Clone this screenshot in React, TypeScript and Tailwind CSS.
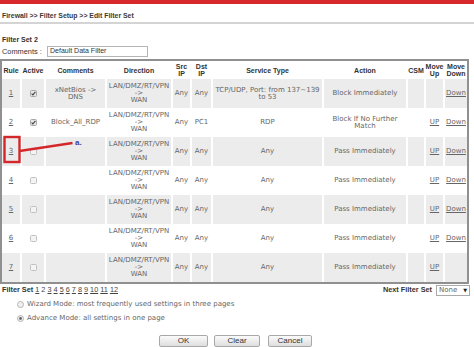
import React from "react";

const GRID =
  "grid grid-cols-[18px_22px_59px_64px_17px_19px_109px_82px_16px_17px_22px] gap-x-[2px]";

type Row = {
  n: number;
  active: boolean;
  comment: React.ReactNode;
  src: string;
  dst: string;
  svc: React.ReactNode;
  action: React.ReactNode;
  up: boolean;
  down: boolean;
};

const rows: Row[] = [
  {
    n: 1,
    active: true,
    comment: (
      <>
        xNetBios -&gt;
        <br />
        DNS
      </>
    ),
    src: "Any",
    dst: "Any",
    svc: (
      <>
        TCP/UDP, Port: from 137~139
        <br />
        to 53
      </>
    ),
    action: "Block Immediately",
    up: false,
    down: true,
  },
  {
    n: 2,
    active: true,
    comment: "Block_All_RDP",
    src: "Any",
    dst: "PC1",
    svc: "RDP",
    action: (
      <>
        Block If No Further
        <br />
        Match
      </>
    ),
    up: true,
    down: true,
  },
  { n: 3, active: false, comment: "", src: "Any", dst: "Any", svc: "Any", action: "Pass Immediately", up: true, down: true },
  { n: 4, active: false, comment: "", src: "Any", dst: "Any", svc: "Any", action: "Pass Immediately", up: true, down: true },
  { n: 5, active: false, comment: "", src: "Any", dst: "Any", svc: "Any", action: "Pass Immediately", up: true, down: true },
  { n: 6, active: false, comment: "", src: "Any", dst: "Any", svc: "Any", action: "Pass Immediately", up: true, down: true },
  { n: 7, active: false, comment: "", src: "Any", dst: "Any", svc: "Any", action: "Pass Immediately", up: true, down: false },
];

function CheckBox({ checked }: { checked: boolean }) {
  return (
    <svg width="7" height="7" viewBox="0 0 7 7">
      <rect x="0.5" y="0.5" width="6" height="6" rx="1" fill={checked ? "#e6e6e6" : "#f4f4f4"} stroke={checked ? "#a8a8a8" : "#c0c0c0"} />
      {checked && <path d="M1.6 3.6 L2.9 4.9 L5.4 1.9" fill="none" stroke="#444" strokeWidth="1.1" />}
    </svg>
  );
}

function Radio({ checked }: { checked: boolean }) {
  return (
    <svg width="7" height="7" viewBox="0 0 7 7">
      <circle cx="3.5" cy="3.5" r="3" fill="#f0f0f0" stroke="#b5b5b5" />
      {checked && <circle cx="3.5" cy="3.5" r="1.4" fill="#666" />}
    </svg>
  );
}

const cellBase = "flex flex-col items-center justify-center text-center";

function HeadCell({ children }: { children: React.ReactNode }) {
  return <div className={cellBase + " leading-[7px]"}>{children}</div>;
}

export default function App() {
  return (
    <div className="relative w-[474px] h-[347px] overflow-hidden bg-white font-['Liberation_Sans',Arial,sans-serif] text-[#333]">
      <div className="h-[4px] bg-[#d7282b]" />
      <div className="pt-[8px] pb-[2px] pl-[2px] border-b-2 border-[#d4d4d4] leading-[8px] text-[6.9px] font-bold text-[#3a3a3a]">
        Firewall &gt;&gt; Filter Setup &gt;&gt; Edit Filter Set
      </div>
      <div className="mt-[12px] pl-[2px] leading-[8px] text-[7px] font-bold">Filter Set 2</div>
      <div className="mt-[2px] flex items-center h-[11px] pl-[2px] text-[7.4px]">
        <span className="w-[45px]">Comments :</span>
        <div className="w-[101px] h-[11px] border border-[#b5b5b5] flex items-center pl-[2px] text-[7px] text-[#333]">
          Default Data Filter
        </div>
      </div>

      <div className="mt-[2px] w-[469px] border-2 border-[#909090] bg-white">
        <div className={GRID + " h-[18px] text-[7px] font-bold text-[#333]"}>
          <HeadCell>Rule</HeadCell>
          <HeadCell>Active</HeadCell>
          <HeadCell>Comments</HeadCell>
          <HeadCell>Direction</HeadCell>
          <HeadCell>
            <span>Src</span>
            <span>IP</span>
          </HeadCell>
          <HeadCell>
            <span>Dst</span>
            <span>IP</span>
          </HeadCell>
          <HeadCell>Service Type</HeadCell>
          <HeadCell>Action</HeadCell>
          <HeadCell>CSM</HeadCell>
          <HeadCell>
            <span>Move</span>
            <span>Up</span>
          </HeadCell>
          <HeadCell>
            <span>Move</span>
            <span>Down</span>
          </HeadCell>
        </div>
        {rows.map((r) => {
          const bg = r.n % 2 === 1 ? "bg-[#ececec]" : "bg-white";
          const c = cellBase + " " + bg;
          return (
            <div
              key={r.n}
              className={GRID + " h-[29px] font-['DejaVu_Sans',Verdana,sans-serif] text-[7px] leading-[6.7px] text-[#666]"}
            >
              <div className={c}>
                <span className="underline">{r.n}</span>
              </div>
              <div className={c}>
                <CheckBox checked={r.active} />
              </div>
              <div className={c}>{r.comment}</div>
              <div className={c}>
                LAN/DMZ/RT/VPN
                <br />
                -&gt;
                <br />
                WAN
              </div>
              <div className={c}>{r.src}</div>
              <div className={c}>{r.dst}</div>
              <div className={c}>{r.svc}</div>
              <div className={c}>{r.action}</div>
              <div className={c}></div>
              <div className={c}>{r.up && <span className="underline">UP</span>}</div>
              <div className={c}>{r.down && <span className="underline">Down</span>}</div>
            </div>
          );
        })}
      </div>

      <div className="mt-[1px] flex justify-between items-center h-[11px] pl-[2px] pr-[4px] text-[7.3px]">
        <div className="text-[#444]">
          <span className="font-bold text-[#333]">Filter Set</span>{" "}
          <span className="underline">1</span> <span>2</span> <span className="underline">3</span>{" "}
          <span className="underline">4</span> <span className="underline">5</span>{" "}
          <span className="underline">6</span> <span className="underline">7</span>{" "}
          <span className="underline">8</span> <span className="underline">9</span>{" "}
          <span className="underline">10</span> <span className="underline">11</span>{" "}
          <span className="underline">12</span>
        </div>
        <div className="flex items-center">
          <span className="font-bold text-[#333]">Next Filter Set</span>
          <div className="ml-[4px] w-[34px] h-[11px] border border-[#a9a9a9] flex items-center justify-between px-[2px] font-['DejaVu_Sans',Verdana,sans-serif] text-[7px] text-[#666]">
            <span>None</span>
            <span className="text-[5px] text-[#222]">▼</span>
          </div>
        </div>
      </div>

      <div className="font-['DejaVu_Sans',Verdana,sans-serif] text-[7px] text-[#666]">
        <div className="mt-[3.5px] h-[10px] flex items-center pl-[17px]">
          <Radio checked={false} />
          <span className="ml-[3px]">Wizard Mode: most frequently used settings in three pages</span>
        </div>
        <div className="mt-[3.5px] h-[10px] flex items-center pl-[17px]">
          <Radio checked={true} />
          <span className="ml-[3px]">Advance Mode: all settings in one page</span>
        </div>
      </div>

      <div className="mt-[11.5px] flex pl-[159px] text-[8px] text-[#333]">
        <div className="w-[49px] h-[12px] flex items-center justify-center border border-[#a8a8a8] rounded-[2px] bg-gradient-to-b from-[#fbfbfb] to-[#dedede]">
          OK
        </div>
        <div className="ml-[6px] w-[46px] h-[12px] flex items-center justify-center border border-[#a8a8a8] rounded-[2px] bg-gradient-to-b from-[#fbfbfb] to-[#dedede]">
          Clear
        </div>
        <div className="ml-[8px] w-[44px] h-[12px] flex items-center justify-center border border-[#a8a8a8] rounded-[2px] bg-gradient-to-b from-[#fbfbfb] to-[#dedede]">
          Cancel
        </div>
      </div>

      <svg className="absolute left-0 top-0 pointer-events-none" width="474" height="347" viewBox="0 0 474 347">
        <rect x="4.5" y="137" width="15" height="25" fill="none" stroke="#d3272a" strokeWidth="2.4" />
        <line x1="19.5" y1="151" x2="72.5" y2="143" stroke="#d3272a" strokeWidth="2.4" />
      </svg>
      <div className="absolute left-[75px] top-[139px] text-[8px] leading-[8px] font-bold text-[#3b3fa6]">a.</div>
    </div>
  );
}
